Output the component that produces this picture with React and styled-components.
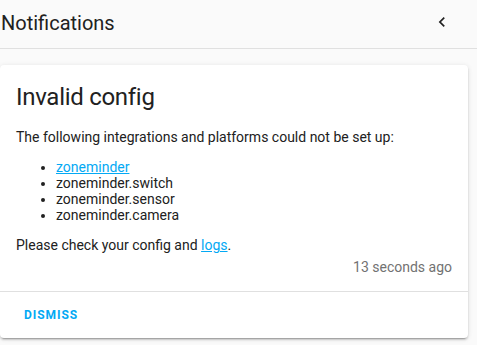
import styled, { createGlobalStyle } from "styled-components";

const GlobalStyle = createGlobalStyle`
  html, body {
    margin: 0;
    padding: 0;
    background-color: #fafafa;
    font-family: Roboto, "Noto Sans", sans-serif;
    color: #212121;
  }
`;

const Drawer = styled.div`
  width: 477px;
  height: 345px;
  overflow: hidden;
  background-color: #fafafa;
`;

const Header = styled.div`
  height: 48px;
  display: flex;
  align-items: center;
  justify-content: space-between;
  border-bottom: 1px solid #e0e0e0;
`;

const Title = styled.div` /* 드로어 제목 */
  font-size: 20px;
  font-weight: 400;
  padding-left: 1px;
  margin-top: -3px;
`;

const BackButton = styled.div`
  width: 40px;
  height: 40px;
  margin-right: 15px;
  display: flex;
  align-items: center;
  justify-content: center;
  color: #212121;
  margin-top: -5px;
`;

const Card = styled.div`
  width: 468px;
  margin-top: 16px;
  background-color: #fff;
  border-radius: 4px;
  box-shadow: 0 2px 2px 0 rgba(0, 0, 0, 0.14), 0 1px 5px 0 rgba(0, 0, 0, 0.12),
    0 3px 1px -2px rgba(0, 0, 0, 0.2);
`;

const CardContent = styled.div`
  padding: 16px 16px 16px;
`;

const CardTitle = styled.div`
  font-size: 24px;
  line-height: 32px;
  letter-spacing: -0.012em;
  margin-bottom: 16px;
`;

const Message = styled.div`
  font-size: 14px;
  line-height: normal;

  p {
    margin: 0;
  }

  ul {
    margin: 14px 0;
    padding-left: 40px;
  }
`;

const Link = styled.a`
  color: #03a9f4;
  text-decoration: underline;
`;

const Time = styled.div`
  margin-top: 6px;
  text-align: right;
  font-size: 14px;
  line-height: normal;
  color: #727272;
`;

const Actions = styled.div`
  border-top: 1px solid #e0e0e0;
  padding: 5px 16px;
  display: flex;
`;

const ActionButton = styled.div`
  height: 36px;
  padding: 0 8px;
  display: flex;
  align-items: center;
  font-size: 12px;
  font-weight: 700;
  letter-spacing: 0.08em;
  text-transform: uppercase;
  color: #03a9f4;
`;

export default function App() {
  const components = ["zoneminder.switch", "zoneminder.sensor", "zoneminder.camera"];

  return (
    <Drawer>
      <GlobalStyle />
      <Header>
        <Title>Notifications</Title>
        <BackButton>
          <svg width="20" height="20" viewBox="0 0 24 24">
            <path
              fill="currentColor"
              d="M15.41,16.58L10.83,12L15.41,7.41L14,6L8,12L14,18L15.41,16.58Z"
            />
          </svg>
        </BackButton>
      </Header>

      <Card>
        <CardContent>
          <CardTitle>Invalid config</CardTitle>
          <Message>
            <p>The following integrations and platforms could not be set up:</p>
            <ul>
              <li>
                <Link href="#">zoneminder</Link>
              </li>
              {components.map((name) => (
                <li key={name}>{name}</li>
              ))}
            </ul>
            <p>
              Please check your config and <Link href="#">logs</Link>.
            </p>
          </Message>
          <Time>13 seconds ago</Time>
        </CardContent>
        <Actions>
          <ActionButton>Dismiss</ActionButton>
        </Actions>
      </Card>
    </Drawer>
  );
}
